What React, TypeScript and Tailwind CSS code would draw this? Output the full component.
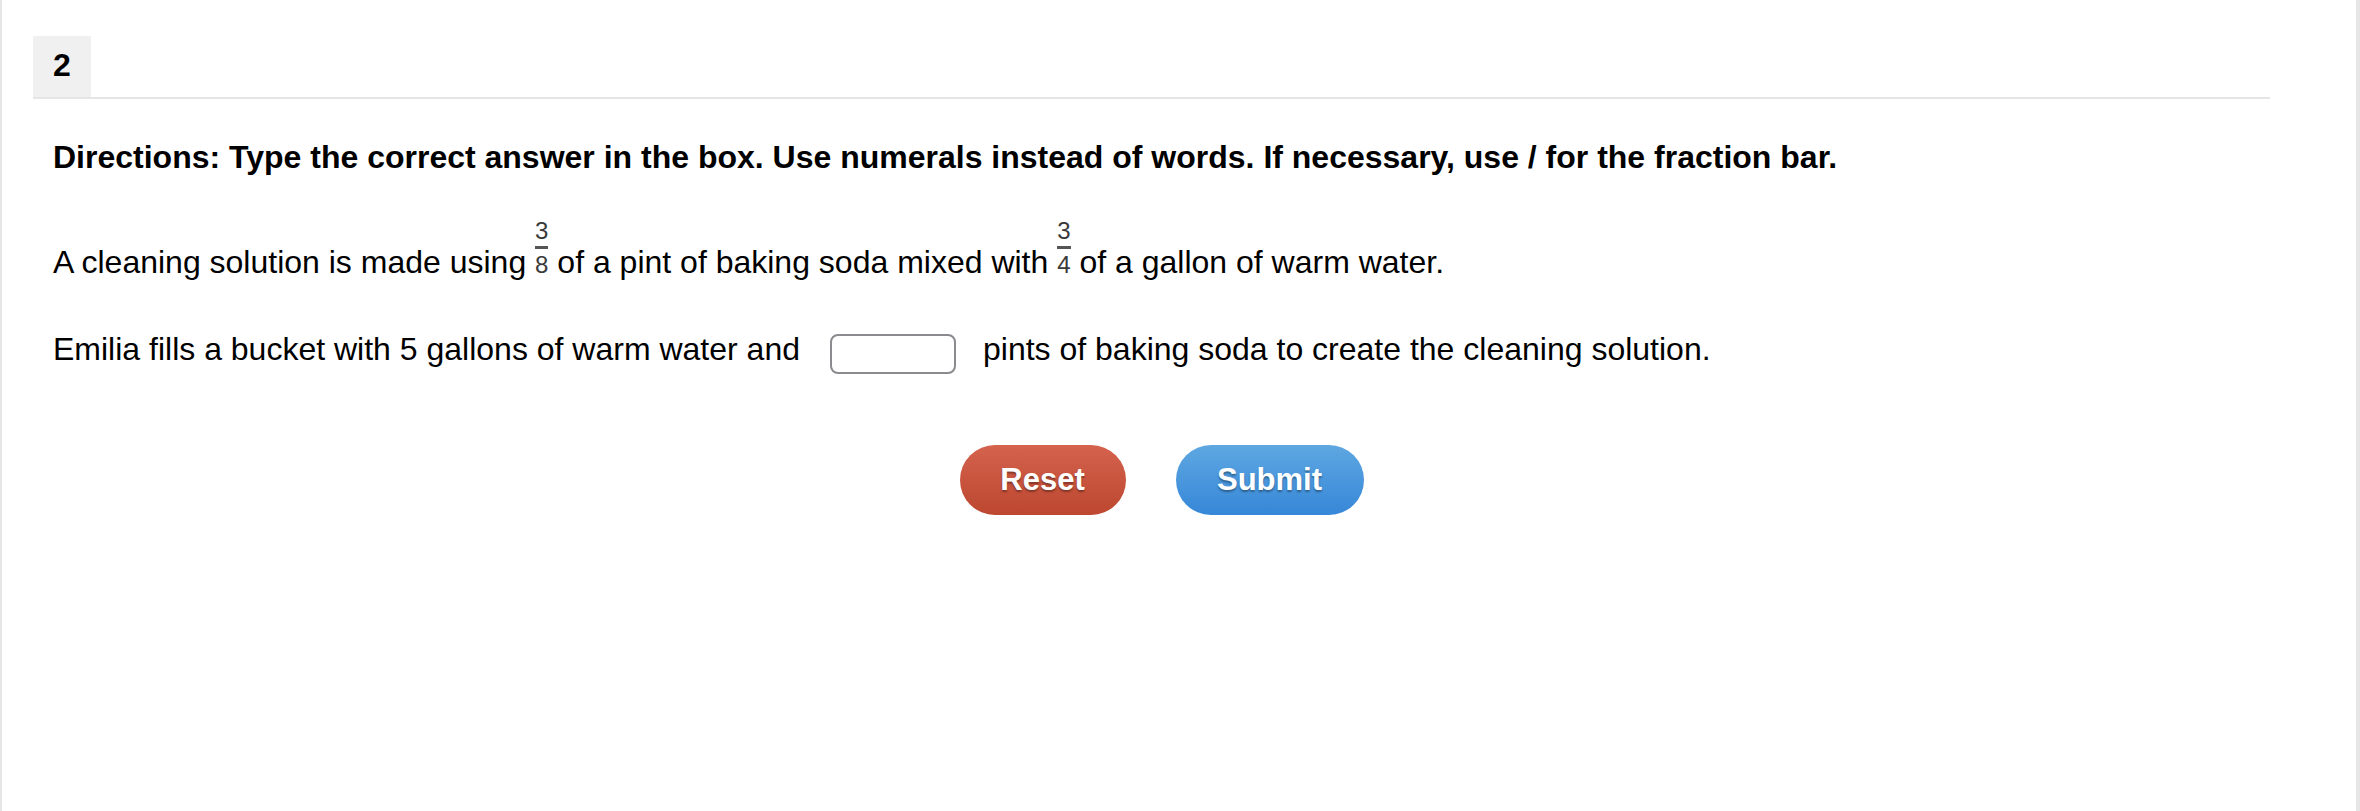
import React from "react";

/* stacked fraction (3 over 8) sitting on the text baseline */
function Frac({ n, d }: { n: string; d: string }) {
  return (
    <span className="inline-flex flex-col items-center align-[34px] text-[24px] leading-[20px] text-[#3a3a3a]">
      <span className="border-b-[3px] border-[#555] pb-[5px]">{n}</span>
      <span className="mt-[6px]">{d}</span>
    </span>
  );
}

export default function App() {
  return (
    <div className="h-[811px] w-[2360px] bg-white font-['Liberation_Sans',Arial,sans-serif] text-black">
      <div className="h-full border-l-2 border-r-4 border-[#e6e6e6] pl-[31px] pt-[36px]">
        {/* question header */}
        <div className="w-[2237px] border-b-2 border-[#e5e5e5]">
          <div className="flex h-[61px] w-[58px] items-center justify-center bg-[#f0f0f0] pb-[3px] text-[32px] font-bold">
            2
          </div>
        </div>

        <div className="w-[2237px] pl-[20px]">
          <p className="mt-[40px] text-[32px] font-bold leading-[37px]">
            Directions: Type the correct answer in the box. Use numerals instead of words. If necessary, use / for the fraction bar.
          </p>

          <p className="mt-[45px] text-[32px] leading-[37px]">
            A cleaning solution is made using <Frac n="3" d="8" /> of a pint of baking soda mixed with{" "}
            <Frac n="3" d="4" /> of a gallon of warm water.
          </p>

          <div className="mt-[50px] flex items-start text-[32px] leading-[37px]">
            <span>Emilia fills a bucket with 5 gallons of warm water and</span>
            <input
              type="text"
              className="ml-[30px] mr-[27px] mt-[3px] h-[40px] w-[126px] rounded-[8px] border-2 border-[#8a8a8f] bg-white"
            />
            <span>pints of baking soda to create the cleaning solution.</span>
          </div>

          <div className="mt-[71px] flex justify-center gap-[50px]">
            <button className="h-[70px] w-[166px] rounded-full bg-gradient-to-b from-[#d4624d] to-[#bd472f] text-[31px] font-bold text-white [text-shadow:0_2px_2px_rgba(0,0,0,0.35)]">
              Reset
            </button>
            <button className="h-[70px] w-[188px] rounded-full bg-gradient-to-b from-[#5ea7e1] to-[#3687d8] text-[31px] font-bold text-white [text-shadow:0_2px_2px_rgba(0,0,0,0.35)]">
              Submit
            </button>
          </div>
        </div>
      </div>
    </div>
  );
}
